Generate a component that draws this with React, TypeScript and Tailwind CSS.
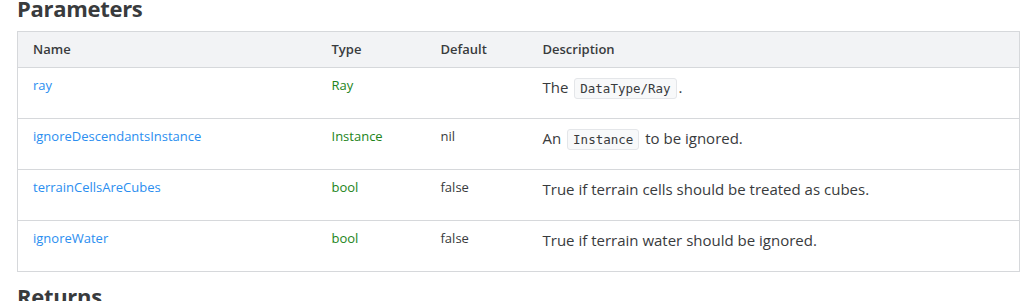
import type React from "react"

type Param = {
  name: string
  type: string
  def: string
  desc: React.ReactNode
}

const Code = ({ children }: { children: React.ReactNode }) => (
  <code className="mx-[2px] inline-block rounded-[3px] border border-[#e4e6e9] bg-[#f8f9fa] px-[5px] font-['DejaVu_Sans_Mono',monospace] text-[12.5px] leading-[19px] text-[#393b3d] align-middle">
    {children}
  </code>
)

const params: Param[] = [
  {
    name: "ray",
    type: "Ray",
    def: "",
    desc: (
      <>
        The <Code>DataType/Ray</Code>.
      </>
    ),
  },
  {
    name: "ignoreDescendantsInstance",
    type: "Instance",
    def: "nil",
    desc: (
      <>
        An <Code>Instance</Code> to be ignored.
      </>
    ),
  },
  {
    name: "terrainCellsAreCubes",
    type: "bool",
    def: "false",
    desc: "True if terrain cells should be treated as cubes.",
  },
  {
    name: "ignoreWater",
    type: "bool",
    def: "false",
    desc: "True if terrain water should be ignored.",
  },
]

export default function App() {
  return (
    <div className="h-[301px] w-[1035px] overflow-hidden bg-white font-['Open_Sans',sans-serif] text-[#393b3d]">
      <div className="pl-[17px] pr-[15px]">
        <h2 className="-mt-[7px] text-[22px] font-bold leading-[30px] tracking-[-0.3px]">Parameters</h2>
        <table className="mt-[8px] w-full table-fixed border-collapse border border-[#d6d8db]">
          <colgroup>
            <col className="w-[299px]" />
            <col className="w-[109px]" />
            <col className="w-[102px]" />
            <col />
          </colgroup>
          <thead>
            <tr className="h-[36px] border-b border-[#d6d8db] bg-[#f2f3f5] text-left text-[13px] font-semibold">
              <th className="pl-[15px] font-semibold">Name</th>
              <th className="pl-[15px] font-semibold">Type</th>
              <th className="pl-[15px] font-semibold">Default</th>
              <th className="pl-[15px] font-semibold">Description</th>
            </tr>
          </thead>
          <tbody>
            {params.map((p) => (
              <tr key={p.name} className="h-[51px] border-b border-[#d6d8db] align-top">
                <td className="pl-[15px] pt-[7px] text-[13px] leading-[20px] text-[#2b8ef0]">{p.name}</td>
                <td className="pl-[15px] pt-[7px] text-[13px] leading-[20px] text-[#23841a]">{p.type}</td>
                <td className="pl-[15px] pt-[7px] text-[13px] leading-[20px]">{p.def}</td>
                <td className="pl-[15px] pt-[6px] text-[15px] leading-[26px]">{p.desc}</td>
              </tr>
            ))}
          </tbody>
        </table>
        <h2 className="mt-[9px] text-[22px] font-bold leading-[30px] tracking-[-0.3px]">Returns</h2>
      </div>
    </div>
  )
}
